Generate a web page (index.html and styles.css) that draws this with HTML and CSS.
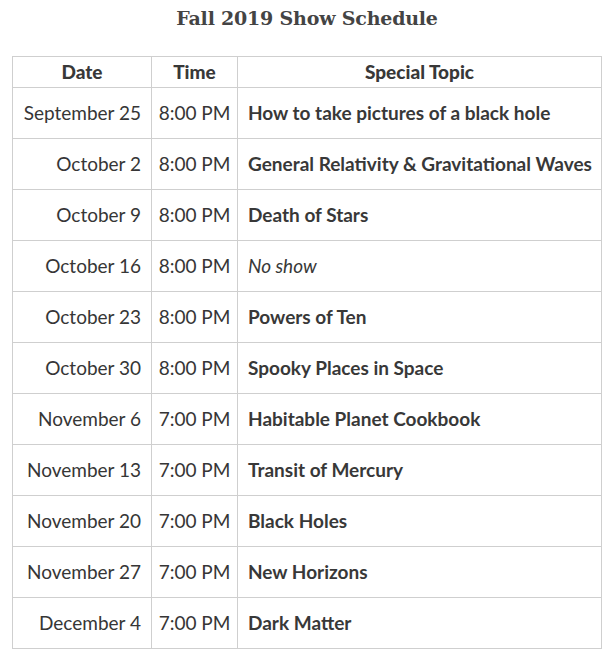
FILE: index.html
```html
<!DOCTYPE html>
<html lang="en">
<head>
<meta charset="utf-8">
<title>Fall 2019 Show Schedule</title>
<link rel="stylesheet" href="styles.css">
</head>
<body>
<main class="page">
  <h2 class="title">Fall 2019 Show Schedule</h2>
  <table class="schedule">
    <colgroup>
      <col class="c-date">
      <col class="c-time">
      <col class="c-topic">
    </colgroup>
    <thead>
      <tr><th>Date</th><th>Time</th><th>Special Topic</th></tr>
    </thead>
    <tbody>
      <tr><td class="date">September 25</td><td class="time">8:00 PM</td><td class="topic">How to take pictures of a black hole</td></tr>
      <tr><td class="date">October 2</td><td class="time">8:00 PM</td><td class="topic">General Relativity &amp; Gravitational Waves</td></tr>
      <tr><td class="date">October 9</td><td class="time">8:00 PM</td><td class="topic">Death of Stars</td></tr>
      <tr><td class="date">October 16</td><td class="time">8:00 PM</td><td class="topic noshow">No show</td></tr>
      <tr><td class="date">October 23</td><td class="time">8:00 PM</td><td class="topic">Powers of Ten</td></tr>
      <tr><td class="date">October 30</td><td class="time">8:00 PM</td><td class="topic">Spooky Places in Space</td></tr>
      <tr><td class="date">November 6</td><td class="time">7:00 PM</td><td class="topic">Habitable Planet Cookbook</td></tr>
      <tr><td class="date">November 13</td><td class="time">7:00 PM</td><td class="topic">Transit of Mercury</td></tr>
      <tr><td class="date">November 20</td><td class="time">7:00 PM</td><td class="topic">Black Holes</td></tr>
      <tr><td class="date">November 27</td><td class="time">7:00 PM</td><td class="topic">New Horizons</td></tr>
      <tr><td class="date">December 4</td><td class="time">7:00 PM</td><td class="topic">Dark Matter</td></tr>
    </tbody>
  </table>
</main>
</body>
</html>
```

FILE: styles.css
```css
html, body {
  margin: 0;
  padding: 0;
  background: #fff;
}

.page {
  padding: 0 11px 0 12px;
  font-family: Lato, "Open Sans", sans-serif;
  color: #363636;
}

.title {
  margin: 0;
  height: 56px;
  padding-top: 5px;
  box-sizing: border-box;
  text-align: center;
  font-family: "DejaVu Serif", serif;
  font-weight: bold;
  font-size: 19px;
  line-height: 26px;
  color: #444;
  letter-spacing: -0.2px;
}

.schedule {
  width: 590px;
  border-collapse: collapse;
  table-layout: fixed;
  font-size: 19px;
}

.c-date { width: 139px; }
.c-time { width: 86px; }

.schedule th,
.schedule td {
  border: 1px solid #cfcfcf;
  padding: 0 10px;
  white-space: nowrap;
}

.schedule th {
  height: 29px;
  padding-bottom: 1px;
  text-align: center;
  font-weight: 900;
  font-size: 19px;
  color: #383838;
}

.schedule td {
  height: 48px;
  padding-bottom: 2px;
}

.date {
  text-align: right;
}

.schedule .time {
  text-align: center;
  padding-left: 6px;
  padding-right: 6px;
}

.topic {
  font-weight: bold;
  color: #383838;
}

.topic.noshow {
  font-weight: normal;
  font-style: italic;
}
```
